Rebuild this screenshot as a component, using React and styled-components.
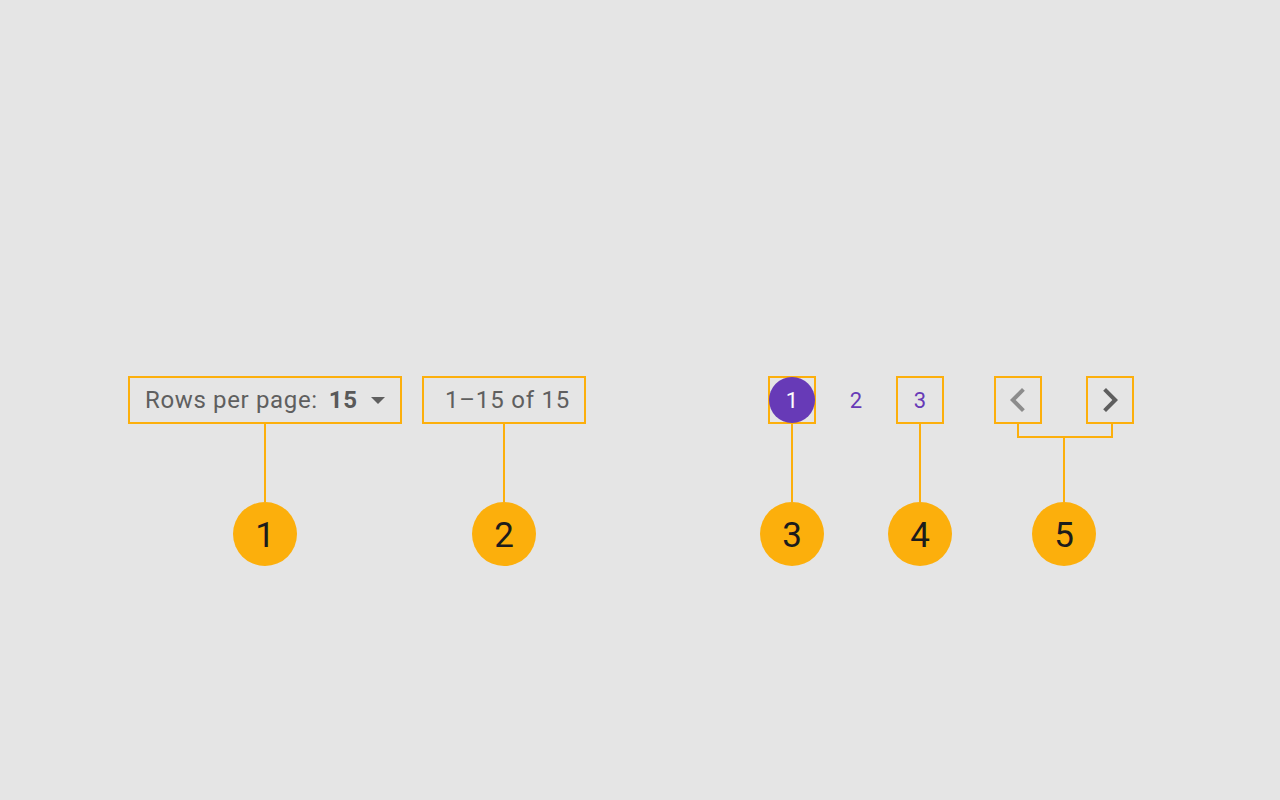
import React from "react";
import styled, { createGlobalStyle } from "styled-components";

const ORANGE = "#fcaf0c";
const PURPLE = "#673ab7";

const GlobalStyle = createGlobalStyle`
  html, body {
    margin: 0;
    padding: 0;
    background: #e5e5e5;
    font-family: Roboto, "Liberation Sans", Arial, sans-serif;
  }
  * { box-sizing: border-box; }
`;

function App() {
  return (
    <>
      <GlobalStyle />
      <Page>
        <Row>
          <Annotated>
            <RowsBox>
              <Label>Rows per page:</Label>
              <Value>15</Value>
              <DropArrow />
            </RowsBox>
            <Stem />
            <Badge>1</Badge>
          </Annotated>

          <Annotated gap={20}>
            <RangeBox>1–15 of 15</RangeBox>
            <Stem />
            <Badge>2</Badge>
          </Annotated>

          <Pages>
            <Annotated>
              <PageButton outlined>
                <PageDot>1</PageDot>
              </PageButton>
              <Stem />
              <Badge>3</Badge>
            </Annotated>
            <Annotated>
              <PageButton>2</PageButton>
            </Annotated>
            <Annotated>
              <PageButton outlined>3</PageButton>
              <Stem />
              <Badge>4</Badge>
            </Annotated>
          </Pages>

          <Annotated gap={50}>
            <NavRow>
              <NavButton>
                <svg width="48" height="48" viewBox="0 0 24 24">
                  <path d="M15.41 7.41L14 6l-6 6 6 6 1.41-1.41L10.83 12z" fill="#8c8c8c" />
                </svg>
              </NavButton>
              <NavButton>
                <svg width="48" height="48" viewBox="0 0 24 24">
                  <path d="M10 6L8.59 7.41 13.17 12l-4.58 4.59L10 18l6-6z" fill="#5e5e5e" />
                </svg>
              </NavButton>
            </NavRow>
            <Bracket />
            <Stem short />
            <Badge>5</Badge>
          </Annotated>
        </Row>
      </Page>
    </>
  );
}
export default App;

const Page = styled.div`
  width: 1280px;
  height: 800px;
  padding: 376px 0 0 128px;
`;

const Row = styled.div`
  display: flex;
  flex-direction: row;
  align-items: flex-start;
`;

const Annotated = styled.div`
  display: flex;
  flex-direction: column;
  align-items: center;
  margin-left: ${(p) => p.gap || 0}px;
`;

const Outline = styled.div`
  height: 48px;
  border: 2px solid ${ORANGE};
  display: flex;
  align-items: center;
  color: #5f5f5f;
  font-size: 24px;
  letter-spacing: 0.8px;
`;

const RowsBox = styled(Outline)`
  width: 274px;
  padding-left: 15px;
  letter-spacing: 0.65px;
`;

const Label = styled.span``;

const Value = styled.span`
  font-weight: 700;
  margin-left: 11px;
  color: #595959;
`;

const DropArrow = styled.span`
  width: 0;
  height: 0;
  margin-left: 13px;
  border-left: 7px solid transparent;
  border-right: 7px solid transparent;
  border-top: 7px solid #5f5f5f;
`;

const RangeBox = styled(Outline)`
  width: 164px;
  padding-left: 21px;
`;

const Pages = styled.div`
  display: flex;
  flex-direction: row;
  gap: 16px;
  margin-left: 182px;
`;

const PageButton = styled.div`
  width: 48px;
  height: 48px;
  border: 2px solid ${(p) => (p.outlined ? ORANGE : "transparent")};
  display: flex;
  align-items: center;
  justify-content: center;
  color: ${PURPLE};
  font-size: 22px;
`;

const PageDot = styled.div`
  flex: none;
  width: 46px;
  height: 46px;
  border-radius: 50%;
  background: ${PURPLE};
  color: #fff;
  display: flex;
  align-items: center;
  justify-content: center;
`;

const NavRow = styled.div`
  display: flex;
  flex-direction: row;
  gap: 44px;
`;

const NavButton = styled.div`
  width: 48px;
  height: 48px;
  border: 2px solid ${ORANGE};
  display: flex;
  align-items: center;
  justify-content: center;
  svg { flex: none; }
`;

const Bracket = styled.div`
  width: 96px;
  height: 14px;
  margin-left: 1px;
  border: 2px solid ${ORANGE};
  border-top: none;
`;

const Stem = styled.div`
  width: 2px;
  height: ${(p) => (p.short ? "64px" : "78px")};
  background: ${ORANGE};
`;

const Badge = styled.div`
  flex: none;
  width: 64px;
  height: 64px;
  margin: 0 -32px;
  padding-top: 3px;
  border-radius: 50%;
  background: ${ORANGE};
  color: #1c1c1c;
  font-size: 35px;
  display: flex;
  align-items: center;
  justify-content: center;
`;
